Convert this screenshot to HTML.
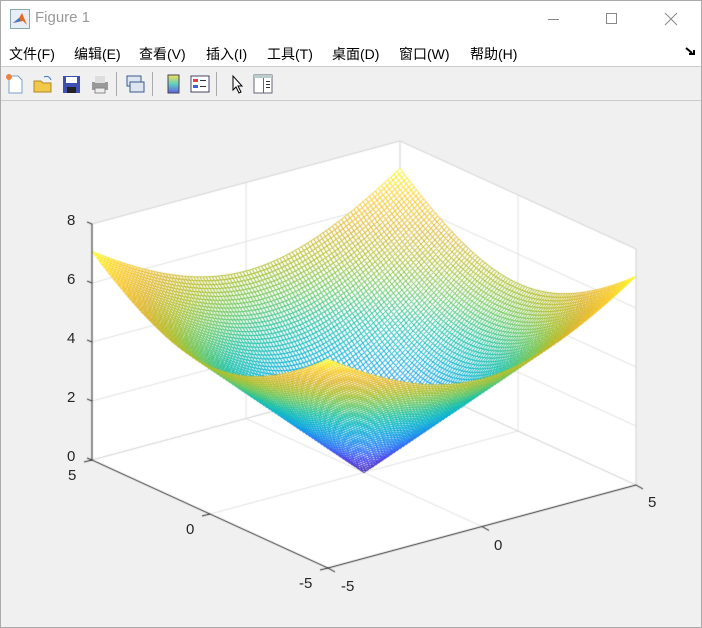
<!DOCTYPE html>
<html><head><meta charset="utf-8"><style>
*{margin:0;padding:0;box-sizing:border-box}
body{width:702px;height:628px;overflow:hidden;background:#f0f0f0;position:relative;font-family:"Liberation Sans","Noto Sans CJK SC",sans-serif}
#win{position:absolute;left:0;top:0;width:702px;height:628px;border:1px solid #aaa;}
#title{position:absolute;left:0;top:0;width:702px;height:37px;background:#fff}
#menu{position:absolute;left:0;top:37px;width:702px;height:30px;background:#fff;border-bottom:1px solid #ccc}
#tool{position:absolute;left:0;top:68px;width:702px;height:33px;background:#f0f0f0;border-bottom:1px solid #ccc}
.m{position:absolute;top:7px;font-size:14px;color:#000}
.t{position:absolute;font-size:15px;color:#262626}
canvas{position:absolute;left:0;top:0}
.sep{position:absolute;top:4px;width:1px;height:24px;background:#aaa}
</style></head><body>
<canvas id="c" width="702" height="628"></canvas>
<div id="title">
<svg style="position:absolute;left:10px;top:9px" width="20" height="20"><rect x="0.5" y="0.5" width="19" height="19" fill="#e8eef5" stroke="#8aa"/><path d="M3 14 L9 9 L12 4 L17 16 L13 12 Z" fill="#e86a1c"/><path d="M3 14 L9 9 L11 12 Z" fill="#3a7bc8"/></svg>
<div style="position:absolute;left:35px;top:9px;font-size:15px;color:#999">Figure 1</div>
<div style="position:absolute;left:548px;top:19px;width:11px;height:1px;background:#888"></div>
<div style="position:absolute;left:606px;top:13px;width:11px;height:11px;border:1px solid #888"></div>
<svg style="position:absolute;left:664px;top:12px" width="14" height="14"><path d="M1 1L13 13M13 1L1 13" stroke="#888" stroke-width="1"/></svg>
</div>
<div id="menu">
<span class="m" style="left:9px">文件(F)</span><span class="m" style="left:74px">编辑(E)</span><span class="m" style="left:139px">查看(V)</span><span class="m" style="left:206px">插入(I)</span><span class="m" style="left:267px">工具(T)</span><span class="m" style="left:332px">桌面(D)</span><span class="m" style="left:399px">窗口(W)</span><span class="m" style="left:470px">帮助(H)</span>
<svg style="position:absolute;left:685px;top:10px" width="12" height="10"><path d="M1 1L7 6M4 7H9V3" stroke="#000" stroke-width="2" fill="none"/></svg>
</div>
<div id="tool">
<svg style="position:absolute;left:4px;top:5px" width="22" height="22"><path d="M5 3H14L18 7V20H5Z" fill="#fff" stroke="#7aa0c8"/><circle cx="5" cy="4" r="3" fill="#f08040"/></svg>
<svg style="position:absolute;left:32px;top:5px" width="22" height="22"><path d="M2 8H9L11 10H19V19H2Z" fill="#f2c84a" stroke="#b08820"/><path d="M12 4Q17 2 19 7" stroke="#3a7bc8" fill="none"/></svg>
<svg style="position:absolute;left:61px;top:5px" width="22" height="22"><rect x="2" y="3" width="17" height="17" fill="#3d4fb0"/><rect x="5" y="4" width="11" height="6" fill="#fff"/><rect x="6" y="14" width="9" height="6" fill="#222"/></svg>
<svg style="position:absolute;left:89px;top:5px" width="22" height="22"><rect x="3" y="9" width="16" height="8" fill="#999"/><rect x="6" y="3" width="10" height="7" fill="#ddd"/><rect x="6" y="15" width="10" height="5" fill="#eee" stroke="#888"/></svg>
<div class="sep" style="left:116px"></div>
<svg style="position:absolute;left:124px;top:5px" width="22" height="22"><rect x="3" y="3" width="14" height="10" fill="#dde6f0" stroke="#3a5a8a"/><rect x="6" y="9" width="14" height="10" fill="#dde6f0" stroke="#3a5a8a"/></svg>
<div class="sep" style="left:152px"></div>
<svg style="position:absolute;left:163px;top:5px" width="22" height="22"><defs><linearGradient id="g" x1="0" y1="0" x2="0" y2="1"><stop offset="0" stop-color="#f8e050"/><stop offset=".5" stop-color="#60d0c0"/><stop offset="1" stop-color="#6060e0"/></linearGradient></defs><rect x="5" y="2" width="11" height="18" fill="url(#g)" stroke="#445"/></svg>
<svg style="position:absolute;left:189px;top:5px" width="22" height="22"><rect x="2" y="3" width="18" height="16" fill="#fff" stroke="#446"/><rect x="4" y="6" width="5" height="3" fill="#e04040"/><rect x="4" y="12" width="5" height="3" fill="#4060e0"/><rect x="11" y="7" width="6" height="1" fill="#333"/><rect x="11" y="13" width="6" height="1" fill="#333"/></svg>
<div class="sep" style="left:216px"></div>
<svg style="position:absolute;left:227px;top:5px" width="22" height="22"><path d="M6 3V17L9 14L12 20L14 19L11 13H15Z" fill="#fff" stroke="#000"/></svg>
<svg style="position:absolute;left:252px;top:5px" width="22" height="22"><rect x="2" y="2" width="18" height="18" fill="#fff" stroke="#667"/><rect x="2" y="2" width="18" height="3" fill="#bcc"/><rect x="11" y="5" width="1" height="15" fill="#667"/><rect x="14" y="8" width="4" height="1" fill="#333"/><rect x="14" y="11" width="4" height="1" fill="#333"/><rect x="14" y="14" width="4" height="1" fill="#333"/></svg>
</div>
<div class="t" style="left:67px;top:212px">8</div>
<div class="t" style="left:67px;top:271px">6</div>
<div class="t" style="left:67px;top:330px">4</div>
<div class="t" style="left:67px;top:389px">2</div>
<div class="t" style="left:67px;top:448px">0</div>
<div class="t" style="left:68px;top:467px">5</div>
<div class="t" style="left:186px;top:521px">0</div>
<div class="t" style="left:299px;top:575px">-5</div>
<div class="t" style="left:341px;top:578px">-5</div>
<div class="t" style="left:494px;top:537px">0</div>
<div class="t" style="left:648px;top:494px">5</div>
<div id="win"></div>
<script>
const c=document.getElementById('c').getContext('2d');
const F=[328,568],LA=[-236,-108],RB=[308,-83],ZS=29.5;
function P(a,b,z){return [F[0]+(a+5)/10*LA[0]+(b+5)/10*RB[0],F[1]+(a+5)/10*LA[1]+(b+5)/10*RB[1]-z*ZS];}
c.fillStyle='#fff';c.beginPath();
[[5,-5,8],[5,5,8],[-5,5,8],[-5,5,0],[-5,-5,0],[5,-5,0]].forEach((p,i)=>{const q=P(...p);i?c.lineTo(q[0],q[1]):c.moveTo(q[0],q[1]);});
c.closePath();c.fill();
function L(p,q,col,w){c.strokeStyle=col;c.lineWidth=w||1;c.beginPath();const A=P(...p),B=P(...q);c.moveTo(A[0],A[1]);c.lineTo(B[0],B[1]);c.stroke();}
const G='#e3e3e3';
L([0,-5,0],[0,5,0],G);L([-5,0,0],[5,0,0],G);
L([5,0,0],[5,0,8],G);L([0,5,0],[0,5,8],G);
for(let z=2;z<8;z+=2){L([5,-5,z],[5,5,z],G);L([-5,5,z],[5,5,z],G);}
const B='#d2d2d2';
L([5,5,0],[5,5,8],B);L([5,-5,8],[5,5,8],B);L([5,5,8],[-5,5,8],B);L([-5,5,0],[-5,5,8],B);
L([5,-5,0],[5,5,0],B);L([5,5,0],[-5,5,0],B);
const stops=[[62,38,168],[68,60,230],[40,110,245],[15,150,230],[5,178,205],[25,192,160],[100,198,95],[170,190,40],[220,180,40],[250,200,35],[249,251,14]];
function col(t){t=Math.max(0,Math.min(1,t))*10;const i=Math.min(9,Math.floor(t)),f=t-i,a=stops[i],b=stops[i+1];return 'rgb('+(a.map((v,k)=>Math.round(v+(b[k]-v)*f)).join(','))+')';}
const N=100,zmax=Math.sqrt(50),q=[];
const Z=(a,b)=>Math.sqrt(a*a+b*b);
for(let i=0;i<N;i++)for(let j=0;j<N;j++){
const a0=-5+10*i/N,a1=-5+10*(i+1)/N,b0=-5+10*j/N,b1=-5+10*(j+1)/N;
const am=(a0+a1)/2,bm=(b0+b1)/2,zm=(Z(a0,b0)+Z(a1,b0)+Z(a0,b1)+Z(a1,b1))/4;
const n=-bm*0.61*0.866/10-am*0.79*0.866/10+zm/8*0.5;
q.push([n,a0,a1,b0,b1,zm]);}
q.sort((x,y)=>x[0]-y[0]);
c.lineWidth=0.95;
for(const [n,a0,a1,b0,b1,zm] of q){
const p1=P(a0,b0,Z(a0,b0)),p2=P(a1,b0,Z(a1,b0)),p3=P(a1,b1,Z(a1,b1)),p4=P(a0,b1,Z(a0,b1));
c.beginPath();c.moveTo(p1[0],p1[1]);c.lineTo(p2[0],p2[1]);c.lineTo(p3[0],p3[1]);c.lineTo(p4[0],p4[1]);c.closePath();
c.fillStyle='#fff';c.fill();c.strokeStyle=col(zm/zmax);c.stroke();}
const K='#262626';
L([5,-5,0],[5,-5,8],K);L([5,-5,0],[-5,-5,0],K);L([-5,-5,0],[-5,5,0],K);
c.strokeStyle=K;c.lineWidth=1;
for(let z=0;z<=8;z+=2){const p=P(5,-5,z);c.beginPath();c.moveTo(p[0],p[1]);c.lineTo(p[0]-5,p[1]-2);c.stroke();}
for(const a of [5,0,-5]){const p=P(a,-5,0);c.beginPath();c.moveTo(p[0],p[1]);c.lineTo(p[0]-8,p[1]+2);c.stroke();}
for(const b of [-5,0,5]){const p=P(-5,b,0);c.beginPath();c.moveTo(p[0],p[1]);c.lineTo(p[0]+7,p[1]+4);c.stroke();}
</script>
</body></html>
